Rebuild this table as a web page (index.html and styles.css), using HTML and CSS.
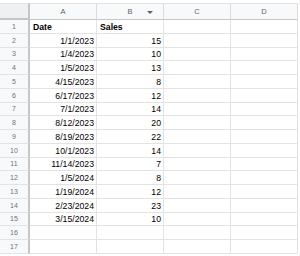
FILE: index.html
```html
<!DOCTYPE html>
<html>
<head>
<meta charset="utf-8">
<link rel="stylesheet" href="styles.css">
</head>
<body>
<table class="sheet">
  <colgroup>
    <col class="c-rh"><col class="c-col"><col class="c-col"><col class="c-col"><col class="c-col">
  </colgroup>
  <thead>
    <tr class="hdr">
      <th class="corner"></th>
      <th class="colh">A</th>
      <th class="colh colh-filter">B<span class="filter"></span></th>
      <th class="colh">C</th>
      <th class="colh">D</th>
    </tr>
  </thead>
  <tbody>
    <tr><th class="rh">1</th><td class="b">Date</td><td class="b">Sales</td><td></td><td></td></tr>
    <tr><th class="rh">2</th><td class="n">1/1/2023</td><td class="n">15</td><td></td><td></td></tr>
    <tr><th class="rh">3</th><td class="n">1/4/2023</td><td class="n">10</td><td></td><td></td></tr>
    <tr><th class="rh">4</th><td class="n">1/5/2023</td><td class="n">13</td><td></td><td></td></tr>
    <tr><th class="rh">5</th><td class="n">4/15/2023</td><td class="n">8</td><td></td><td></td></tr>
    <tr><th class="rh">6</th><td class="n">6/17/2023</td><td class="n">12</td><td></td><td></td></tr>
    <tr><th class="rh">7</th><td class="n">7/1/2023</td><td class="n">14</td><td></td><td></td></tr>
    <tr><th class="rh">8</th><td class="n">8/12/2023</td><td class="n">20</td><td></td><td></td></tr>
    <tr><th class="rh">9</th><td class="n">8/19/2023</td><td class="n">22</td><td></td><td></td></tr>
    <tr><th class="rh">10</th><td class="n">10/1/2023</td><td class="n">14</td><td></td><td></td></tr>
    <tr><th class="rh">11</th><td class="n">11/14/2023</td><td class="n">7</td><td></td><td></td></tr>
    <tr><th class="rh">12</th><td class="n">1/5/2024</td><td class="n">8</td><td></td><td></td></tr>
    <tr><th class="rh">13</th><td class="n">1/19/2024</td><td class="n">12</td><td></td><td></td></tr>
    <tr><th class="rh">14</th><td class="n">2/23/2024</td><td class="n">23</td><td></td><td></td></tr>
    <tr><th class="rh">15</th><td class="n">3/15/2024</td><td class="n">10</td><td></td><td></td></tr>
    <tr><th class="rh">16</th><td></td><td></td><td></td><td></td></tr>
    <tr><th class="rh">17</th><td></td><td></td><td></td><td></td></tr>
  </tbody>
</table>
</body>
</html>
```
FILE: styles.css
```css
html, body {
  margin: 0;
  padding: 0;
  background: #ffffff;
  overflow: hidden;
}
body {
  padding-top: 3px;
  font-family: "Liberation Sans", Arial, sans-serif;
}
.sheet {
  border-collapse: separate;
  border-spacing: 0;
  table-layout: fixed;
  width: 298px;
}
.c-rh { width: 30px; }
.c-col { width: 67px; }

th, td {
  padding: 0;
  box-sizing: border-box;
  overflow: hidden;
  white-space: nowrap;
}
.hdr th {
  height: 17px;
  background: #f8f9fa;
  border-top: 1px solid #e3e3e3;
  border-right: 1px solid #dadce0;
  border-bottom: 1px solid #c4c7c5;
  font-weight: normal;
  font-size: 7.5px;
  color: #5f6368;
  text-align: center;
  vertical-align: middle;
}
.hdr .corner {
  background: #eef0f2;
  border-right: 2px solid #c4c7c5;
  border-bottom: 2px solid #c4c7c5;
}
.colh-filter { position: relative; }
.filter {
  position: absolute;
  right: 10px;
  top: 7px;
  width: 0;
  height: 0;
  border-left: 3px solid transparent;
  border-right: 3px solid transparent;
  border-top: 3px solid #5f6368;
}
tbody tr { height: 13.75px; }
.rh {
  background: #f8f9fa;
  border-right: 2px solid #c4c7c5;
  border-bottom: 1px solid #e3e3e3;
  font-weight: normal;
  font-size: 7px;
  color: #6f7377;
  text-align: center;
  vertical-align: middle;
}
td {
  border-right: 1px solid #e3e3e3;
  border-bottom: 1px solid #e3e3e3;
  font-size: 8.7px;
  color: #000;
  vertical-align: bottom;
  line-height: 12px;
}
td.n {
  text-align: right;
  padding-right: 2px;
}
td.b {
  font-weight: bold;
  text-align: left;
  padding-left: 3px;
}
```
